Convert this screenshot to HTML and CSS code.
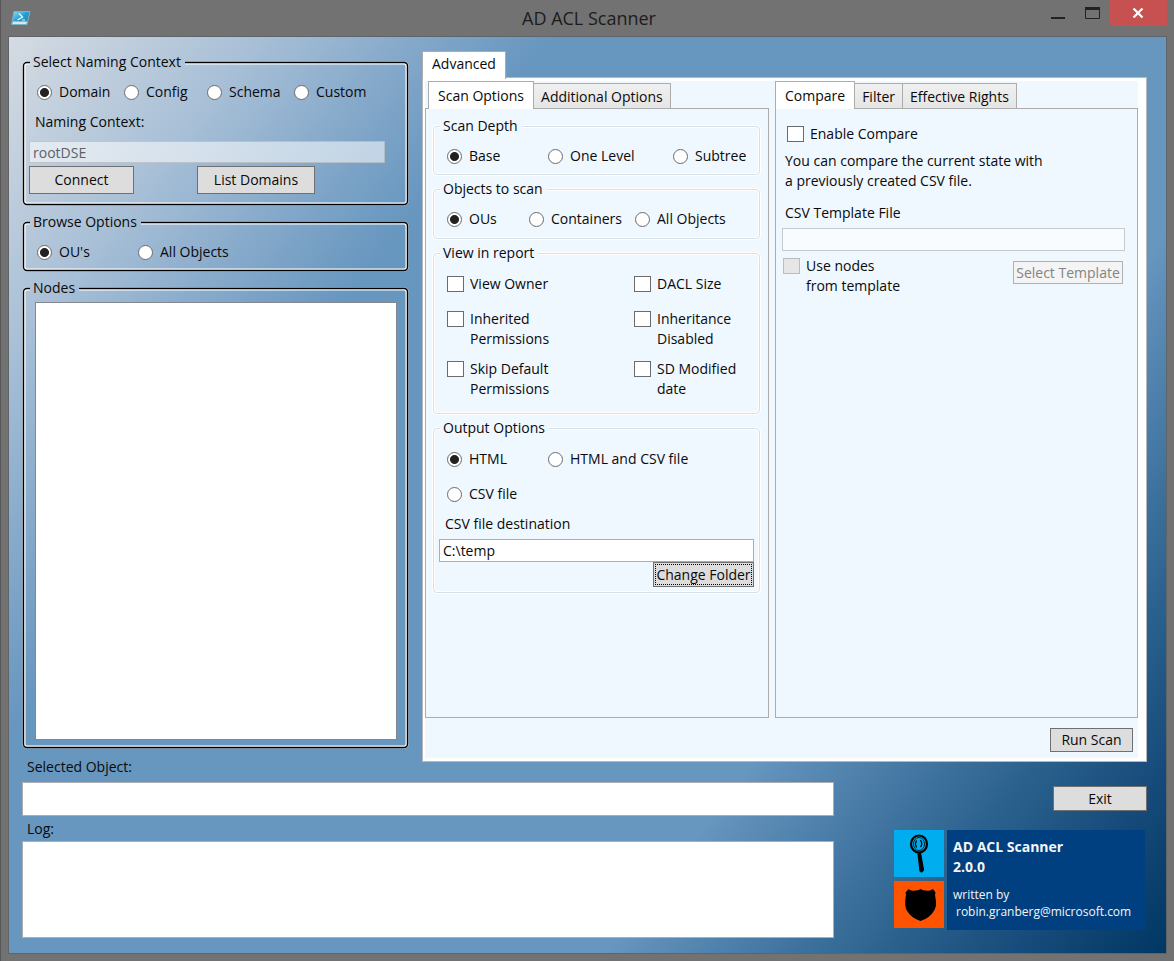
FILE: index.html
```
<!DOCTYPE html>
<html lang="en">
<head>
<meta charset="utf-8">
<title>AD ACL Scanner</title>
<link rel="stylesheet" href="styles.css">
</head>
<body>
<div class="window">
  <header class="titlebar">
    <svg class="app-icon" width="20" height="16" viewBox="0 0 20 16" aria-hidden="true">
      <defs><linearGradient id="ps" x1="0" y1="0" x2="1" y2="1"><stop offset="0" stop-color="#9fe0f5"/><stop offset=".5" stop-color="#1e9dd0"/><stop offset="1" stop-color="#2f7fae"/></linearGradient></defs>
      <path d="M3 1.500H19L16 14.500H.5Z" fill="url(#ps)" stroke="#7fb0c4"/>
      <path d="M2 11.500H16.200L15.500 14H1.300Z" fill="#dbe6ea"/>
      <path d="M8 3.500L11.500 7L6.500 10" fill="none" stroke="#e8f8ff" stroke-width="1.400"/>
      <path d="M11 10H14" stroke="#e8f8ff"/>
    </svg>
    <h1 class="title">AD ACL Scanner</h1>
    <div class="caption-buttons">
      <button class="cap" aria-label="Minimize"><svg width="14" height="12" viewBox="0 0 14 12"><path d="M0 11H14" stroke="#222" stroke-width="2"/></svg></button>
      <button class="cap" aria-label="Maximize"><svg width="15" height="12" viewBox="0 0 15 12"><path d="M.5 .5H14.500V11.500H.5Z" fill="none" stroke="#222"/><path d="M0 1.500H15" stroke="#222" stroke-width="3"/></svg></button>
      <button class="cap cap-close" aria-label="Close"><svg width="12" height="10" viewBox="0 0 12 10"><path d="M1.500 .5L10.500 9.500M10.500 .5L1.500 9.500" stroke="#fff" stroke-width="2.200"/></svg></button>
    </div>
  </header>

  <main class="client">
    <div class="left">
      <fieldset class="group strong">
        <legend>Select Naming Context</legend>
        <div class="radios naming-radios">
          <label class="opt"><input type="radio" name="nc" checked>Domain</label>
          <label class="opt"><input type="radio" name="nc">Config</label>
          <label class="opt"><input type="radio" name="nc">Schema</label>
          <label class="opt"><input type="radio" name="nc">Custom</label>
        </div>
        <label class="caption naming-caption" for="root">Naming Context:</label>
        <input class="field root" id="root" type="text" value="rootDSE" disabled>
        <div class="naming-buttons">
          <button class="btn connect">Connect</button>
          <button class="btn domains">List Domains</button>
        </div>
      </fieldset>
      <fieldset class="group strong">
        <legend>Browse Options</legend>
        <div class="radios browse-radios">
          <label class="opt"><input type="radio" name="br" checked>OU's</label>
          <label class="opt"><input type="radio" name="br">All Objects</label>
        </div>
      </fieldset>
      <fieldset class="group strong nodes">
        <legend>Nodes</legend>
        <div class="tree" role="tree" aria-label="Nodes"></div>
      </fieldset>
    </div>

    <div class="advanced">
      <button class="outer-tab">Advanced</button>
      <div class="outer-page">
        <div class="surface">
          <div class="columns">
            <section class="tabset scan">
              <div class="tabs">
                <button class="tab active">Scan Options</button>
                <button class="tab">Additional Options</button>
              </div>
              <div class="page scan-page">
                <fieldset class="group soft">
                  <legend>Scan Depth</legend>
                  <div class="radios depth-radios">
                    <label class="opt"><input type="radio" name="sd" checked>Base</label>
                    <label class="opt"><input type="radio" name="sd">One Level</label>
                    <label class="opt"><input type="radio" name="sd">Subtree</label>
                  </div>
                </fieldset>
                <fieldset class="group soft">
                  <legend>Objects to scan</legend>
                  <div class="radios object-radios">
                    <label class="opt"><input type="radio" name="ob" checked>OUs</label>
                    <label class="opt"><input type="radio" name="ob">Containers</label>
                    <label class="opt"><input type="radio" name="ob">All Objects</label>
                  </div>
                </fieldset>
                <fieldset class="group soft">
                  <legend>View in report</legend>
                  <div class="checks">
                    <label class="opt"><input type="checkbox"><span>View Owner</span></label>
                    <label class="opt"><input type="checkbox"><span>DACL Size</span></label>
                    <label class="opt"><input type="checkbox"><span>Inherited<br>Permissions</span></label>
                    <label class="opt"><input type="checkbox"><span>Inheritance<br>Disabled</span></label>
                    <label class="opt"><input type="checkbox"><span>Skip Default<br>Permissions</span></label>
                    <label class="opt"><input type="checkbox"><span>SD Modified<br>date</span></label>
                  </div>
                </fieldset>
                <fieldset class="group soft">
                  <legend>Output Options</legend>
                  <div class="radios output-radios">
                    <label class="opt"><input type="radio" name="out" checked>HTML</label>
                    <label class="opt"><input type="radio" name="out">HTML and CSV file</label>
                    <label class="opt"><input type="radio" name="out">CSV file</label>
                  </div>
                  <label class="caption dest-caption" for="dest">CSV file destination</label>
                  <div class="destination">
                    <input class="field" id="dest" type="text" value="C:\temp">
                    <button class="btn change">Change Folder</button>
                  </div>
                </fieldset>
              </div>
            </section>

            <section class="tabset compare">
              <div class="tabs">
                <button class="tab active">Compare</button>
                <button class="tab">Filter</button>
                <button class="tab">Effective Rights</button>
              </div>
              <div class="page compare-page">
                <label class="opt enable"><input type="checkbox"><span>Enable Compare</span></label>
                <p class="note">You can compare the current state with<br>a previously created CSV file.</p>
                <label class="template-label" for="tpl">CSV Template File</label>
                <input class="field template-file" id="tpl" type="text" disabled>
                <div class="template-row">
                  <label class="opt"><input type="checkbox" disabled><span>Use nodes<br>from template</span></label>
                  <button class="btn select" disabled>Select Template</button>
                </div>
              </div>
            </section>
          </div>
          <button class="btn run">Run Scan</button>
        </div>
      </div>
    </div>

    <label class="status-caption selected-caption" for="sel">Selected Object:</label>

    <div class="status">
      <input class="box selected" id="sel" type="text">
      <label class="status-caption" for="log">Log:</label>
      <textarea class="box log" id="log"></textarea>
    </div>

    <div class="side">
      <button class="btn exit">Exit</button>
      <div class="about">
        <div class="tiles">
          <div class="tile tile-search">
            <svg width="50" height="47" viewBox="0 0 50 47" aria-hidden="true">
              <ellipse cx="25" cy="14" rx="8" ry="8.500" fill="none" stroke="#000" stroke-width="2.200"/>
              <ellipse cx="25" cy="14" rx="5.500" ry="6.500" fill="none" stroke="#000" stroke-width=".8"/>
              <path d="M22.500 17.500Q20.500 14 22.500 10.500M26.500 10Q29 14 26.500 17" fill="none" stroke="#000" stroke-width="1.200"/>
              <path d="M24 23.500L26.500 23L29.500 40L27.500 42L26 41Z" fill="#000" stroke="#000" stroke-width="1.200" stroke-linejoin="round"/>
            </svg>
          </div>
          <div class="tile tile-shield">
            <svg width="50" height="47" viewBox="0 0 50 47" aria-hidden="true">
              <path d="M14.500 8Q17 10.500 21 9.500Q24.500 9.500 26.500 8Q29 9.500 32 9.500Q36 10.500 39 8L41.500 11.500Q40.500 14 41.500 17Q43 24 40.500 29Q36 37 26.500 40Q17 37 12.500 29Q10.500 24 11.500 17Q12.500 14 11.500 11.500Z" fill="#000"/>
            </svg>
          </div>
        </div>
        <div class="credits">
          <strong>AD ACL Scanner<br>2.0.0</strong>
          <p class="author">written by</p>
          <p class="mail">robin.granberg@microsoft.com</p>
        </div>
      </div>
    </div>
  </main>
</div>
</body>
</html>
```
FILE: styles.css
```
* { box-sizing: border-box; }
body {
  margin: 0;
  font: 14px/20px "Open Sans", "Noto Sans", sans-serif;
  color: #0a0a0a;
}
button, input, textarea { font: inherit; color: inherit; margin: 0; border-radius: 0; }
h1, p { margin: 0; font-weight: 400; }
svg { display: block; }

/* Window frame */
.window {
  min-height: 100vh;
  display: flex;
  flex-direction: column;
  padding: 0 7px 7px;
  background: #727272;
  border-left: 1px solid #575757;
}
.titlebar {
  height: 36px;
  display: grid;
  grid-template-columns: 1fr auto 1fr;
  align-items: center;
  padding-left: 3px;
}
.title { font-size: 18px; line-height: 36px; color: #1c1c1c; }
.caption-buttons { display: flex; justify-content: flex-end; align-self: start; }
.cap {
  width: 34px;
  height: 26px;
  padding: 0;
  border: 0;
  background: none;
  display: flex;
  align-items: center;
  justify-content: center;
}
.cap-close { width: 58px; background: #c75050; }

.client {
  flex: 1;
  display: grid;
  grid-template-columns: 387px 1fr 300px;
  grid-template-rows: 1fr auto auto;
  column-gap: 13px;
  padding: 15px 19px 15px 13px;
  border: 1px solid #5f6468;
  background: linear-gradient(128deg, #d5dbe2 0%, #a9c0d7 13%, #7fa5c8 23%, #6796bf 29%, #6796bf 70%, #4376a2 79%, #2b628d 85%, #174b7b 92%, #003763 100%);
}
.left { display: flex; flex-direction: column; gap: 6px; }

/* Group boxes: a three-line rounded frame, open behind the legend */
.group {
  min-width: 0;
  margin: 0;
  padding: 0;
  border: 3px solid transparent;
}
.strong { border-image: url("data:image/svg+xml,%3Csvg xmlns='http://www.w3.org/2000/svg' width='24' height='24'%3E%3Crect x='.5' y='.5' width='23' height='23' rx='4.5' fill='none' stroke='%23fff' stroke-opacity='.35'/%3E%3Crect x='2.5' y='2.5' width='19' height='19' rx='2.5' fill='none' stroke='%23fff' stroke-width='2'/%3E%3Crect x='1.5' y='1.5' width='21' height='21' rx='3.5' fill='none' stroke='%23000' stroke-width='1.4'/%3E%3C/svg%3E") 8 / 8px; }
.soft { border-image: url("data:image/svg+xml,%3Csvg xmlns='http://www.w3.org/2000/svg' width='24' height='24'%3E%3Crect x='1.5' y='1.5' width='21' height='21' rx='3.5' fill='none' stroke='%23fff' stroke-width='3'/%3E%3Crect x='1.5' y='1.5' width='21' height='21' rx='3.5' fill='none' stroke='%23d5dfe5'/%3E%3C/svg%3E") 8 / 8px; }
legend { margin-left: 5px; padding: 0 4px 0 3px; }

.radios { display: grid; padding: 10px 0 7px 12px; }
.naming-radios { grid-template-columns: 87px 83px 87px 1fr; padding-bottom: 10px; }
.browse-radios { grid-template-columns: 101px 1fr; }
.depth-radios { grid-template-columns: 101px 125px 1fr; }
.object-radios { grid-template-columns: 82px 106px 1fr; padding-bottom: 8px; }
.output-radios { grid-template-columns: 101px 1fr; row-gap: 15px; padding: 11px 0 10px 12px; }
.checks {
  display: grid;
  grid-template-columns: 187px 1fr;
  grid-template-rows: 25px 40px 40px;
  row-gap: 10px;
  padding: 11px 0 13px 12px;
}
.opt { display: flex; align-items: center; gap: 7px; white-space: nowrap; }
.opt:has(span) { align-items: flex-start; gap: 6px; }
input[type="radio"], input[type="checkbox"] {
  appearance: none;
  flex: none;
  background: #fff;
  border: 1px solid #6b6b6b;
}
input[type="radio"] { width: 15px; height: 15px; border-radius: 50%; }
input[type="radio"]:checked { background: radial-gradient(circle, #212121 4px, #fff 5px); }
input[type="checkbox"] { width: 17px; height: 16px; margin-top: 2px; }
input[type="checkbox"]:disabled { background: #e6e6e6; border-color: #bcbcbc; }

.btn {
  padding: 0;
  border: 1px solid #707070;
  background: #ddd;
  text-align: center;
  white-space: nowrap;
}
.btn:disabled { background: #f4f4f4; border-color: #adb2b5; color: #838383; }
.field {
  display: block;
  height: 23px;
  padding: 0 3px;
  border: 1px solid #abadb3;
  background: #fff;
}
.caption { display: block; }

.naming-caption { padding: 0 0 9px 10px; }
.root {
  width: calc(100% - 25px);
  height: 22px;
  margin-left: 4px;
  background: rgba(255, 255, 255, .55);
  border-color: rgba(171, 173, 179, .6);
  color: #5a6168;
}
.naming-buttons { display: flex; gap: 63px; padding: 3px 0 9px 4px; }
.connect { width: 105px; height: 28px; }
.domains { width: 118px; height: 28px; }

.nodes { flex: 1; display: flex; flex-direction: column; }
.tree {
  flex: 1;
  margin: 4px 9px 6px 10px;
  border: 1px solid #828790;
  background: #fff;
}

/* Tabs */
.advanced {
  grid-column: 2 / 4;
  grid-row: 1 / 3;
  display: flex;
  flex-direction: column;
  margin-bottom: 20px;
}
.outer-tab {
  align-self: flex-start;
  z-index: 1;
  height: 28px;
  margin: -1px 0 -2px;
  padding: 0 9px 4px;
  border: 1px solid #acacac;
  border-bottom: 0;
  background: #fff;
}
.outer-page {
  flex: 1;
  display: flex;
  padding: 3px 8px 3px 2px;
  border: 1px solid #b4b8bc;
  background: #fff;
}
.surface {
  flex: 1;
  display: flex;
  flex-direction: column;
  gap: 10px;
  background: #eff7ff;
}
.columns { flex: 1; display: grid; grid-template-columns: 344px 1fr; column-gap: 6px; }
.tabset { display: flex; flex-direction: column; }
.tabs { display: flex; align-items: flex-end; height: 27px; }
.scan .tabs { padding-left: 3px; }
.tab {
  height: 25px;
  padding: 2px 7px 0;
  border: 1px solid #acacac;
  border-bottom: 0;
  border-left-width: 0;
  background: linear-gradient(#f0f0f0, #e5e5e5);
}
.tab.active {
  z-index: 1;
  height: 28px;
  margin-bottom: -1px;
  padding: 0 9px;
  border-left-width: 1px;
  background: #fff;
}
.page { flex: 1; border: 1px solid #acacac; }
.scan-page {
  display: flex;
  flex-direction: column;
  gap: 3px;
  padding: 7px 7px 7px 6px;
}
.dest-caption { padding: 0 0 5px 10px; }
.destination {
  display: flex;
  flex-direction: column;
  padding: 0 4px 4px;
}
.change {
  align-self: flex-end;
  width: 101px;
  height: 25px;
  outline: 1px dotted #000;
  outline-offset: -3px;
}

.compare-page { padding: 15px 12px 15px 6px; }
.enable { padding: 0 0 7px 5px; }
.note { padding: 0 0 12px 3px; }
.template-label { display: block; padding: 0 0 5px 3px; }
.template-file { width: 100%; background: #f8fcff; border-color: #c6cbd1; }
.template-row {
  display: flex;
  justify-content: space-between;
  align-items: flex-start;
  padding: 5px 2px 0 1px;
}
.select { width: 110px; height: 23px; margin-top: 5px; }
.run { align-self: flex-end; width: 83px; height: 24px; margin: 0 5px 6px; }

/* Status area */
.status-caption { display: block; padding: 3px 0 2px 5px; }
.selected-caption { grid-column: 1; padding: 8px 0 5px 5px; }
.status { grid-column: 1 / 3; display: flex; flex-direction: column; }
.box {
  display: block;
  width: 100%;
  padding: 4px;
  border: 1px solid #abadb3;
  background: #fff;
  resize: none;
}
.selected { height: 34px; }
.log { height: 97px; }

.side {
  display: flex;
  flex-direction: column;
  align-items: flex-end;
  gap: 19px;
  padding-top: 4px;
}
.exit { width: 94px; height: 25px; }
.about { display: flex; gap: 3px; margin-right: 2px; }
.tiles { display: flex; flex-direction: column; gap: 4px; }
.tile { width: 50px; height: 47px; }
.tile-search { background: #00adef; }
.tile-shield { background: #ff5300; }
.credits {
  width: 198px;
  height: 100px;
  padding: 7px 6px;
  background: #003f80;
  color: #f5f5f5;
}
.author, .mail { font-size: 12px; line-height: 17px; }
.author { margin-top: 9px; }
.mail { padding-left: 3px; }
```
